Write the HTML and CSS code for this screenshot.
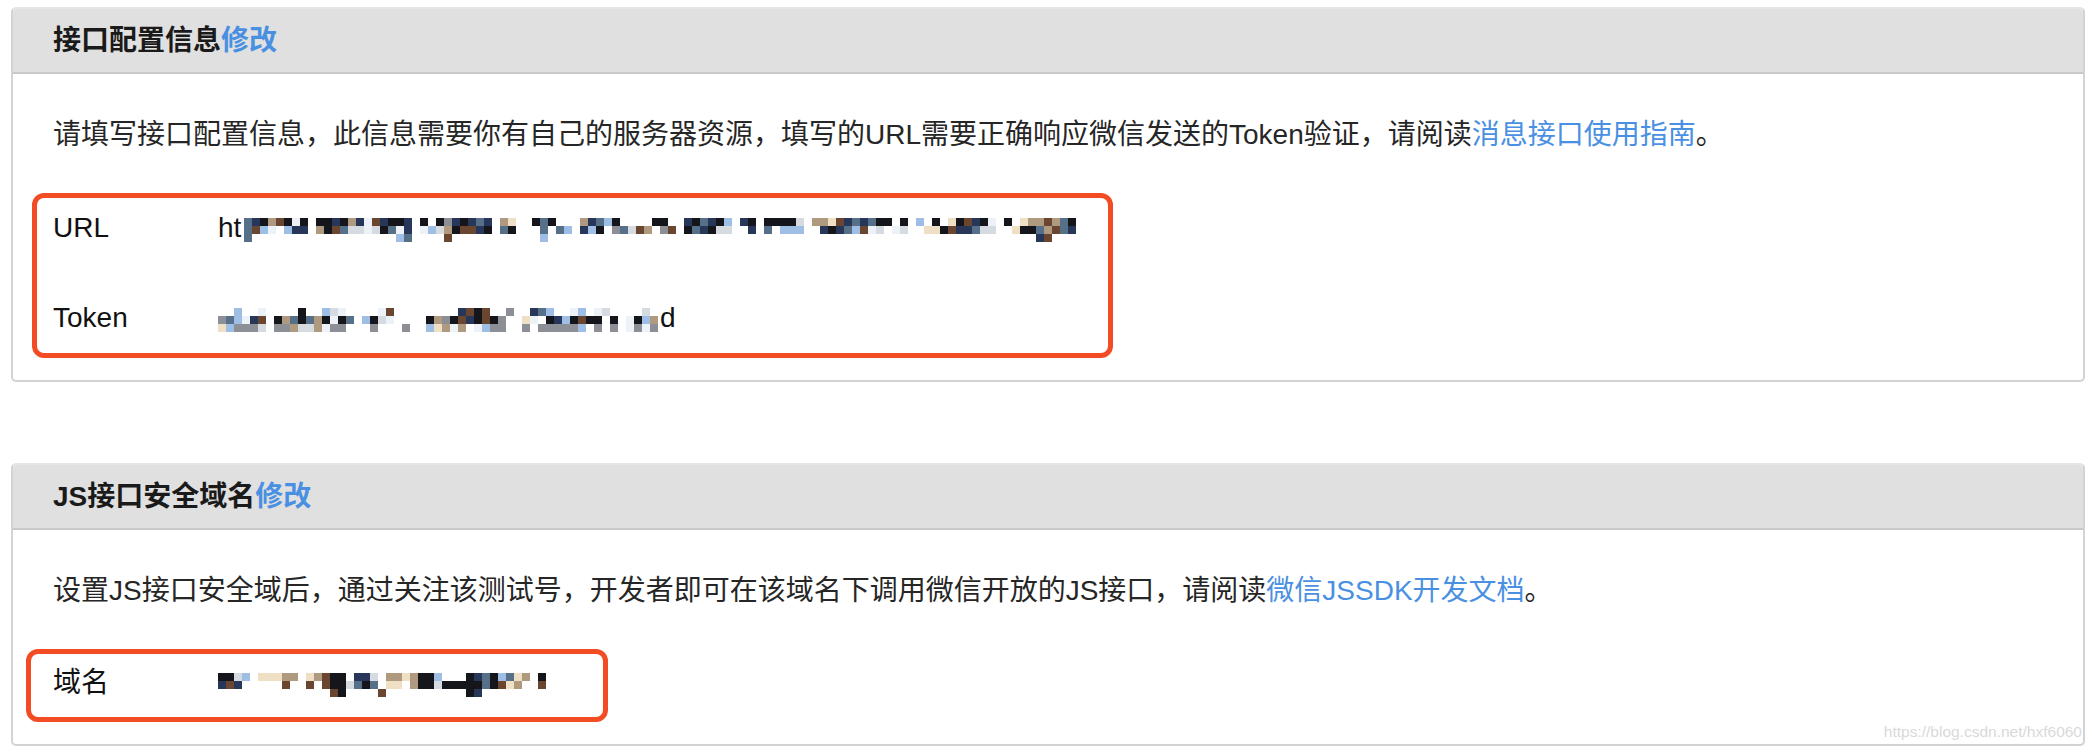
FILE: index.html
```html
<!DOCTYPE html>
<html lang="zh-CN">
<head>
<meta charset="utf-8">
<title>测试号管理</title>
<link rel="stylesheet" href="styles.css">
</head>
<body>
<div class="page">
  <section class="panel">
    <div class="panel-hd">接口配置信息<a class="link" href="#">修改</a></div>
    <div class="panel-bd">
      <p class="desc">请填写接口配置信息，此信息需要你有自己的服务器资源，填写的URL需要正确响应微信发送的Token验证，请阅读<a class="link" href="#">消息接口使用指南</a>。</p>
      <div class="mark mark-cfg">
        <div class="row">
          <div class="label">URL</div>
          <div class="value">ht<svg class="mz mz-url" width="836" height="24" viewBox="0 0 836 24">
            <rect class="s" x="0" y="0"/><rect class="n" x="8" y="0"/><rect class="k" x="16" y="0"/><rect class="t" x="24" y="0"/><rect class="r" x="32" y="0"/><rect class="k" x="40" y="0"/><rect class="w" x="48" y="0"/><rect class="k" x="56" y="0"/>
            <rect class="s" x="0" y="8"/><rect class="r" x="8" y="8"/><rect class="b" x="16" y="8"/><rect class="w" x="24" y="8"/><rect class="b" x="40" y="8"/><rect class="n" x="48" y="8"/><rect class="n" x="56" y="8"/>
            <rect class="s" x="0" y="16"/>
            <rect class="k" x="72" y="0"/><rect class="k" x="80" y="0"/><rect class="n" x="88" y="0"/><rect class="k" x="96" y="0"/><rect class="t" x="104" y="0"/><rect class="n" x="112" y="0"/><rect class="w" x="120" y="0"/><rect class="r" x="128" y="0"/><rect class="n" x="136" y="0"/><rect class="k" x="144" y="0"/><rect class="k" x="152" y="0"/><rect class="n" x="160" y="0"/>
            <rect class="t" x="72" y="8"/><rect class="k" x="80" y="8"/><rect class="r" x="88" y="8"/><rect class="s" x="96" y="8"/><rect class="g" x="104" y="8"/><rect class="g" x="112" y="8"/><rect class="w" x="120" y="8"/><rect class="g" x="128" y="8"/><rect class="k" x="136" y="8"/><rect class="s" x="144" y="8"/><rect class="w" x="152" y="8"/><rect class="n" x="160" y="8"/>
            <rect class="b" x="152" y="16"/><rect class="s" x="160" y="16"/>
            <rect class="k" x="176" y="0"/><rect class="k" x="192" y="0"/><rect class="m" x="200" y="0"/><rect class="n" x="208" y="0"/><rect class="k" x="216" y="0"/><rect class="n" x="224" y="0"/><rect class="s" x="232" y="0"/><rect class="n" x="240" y="0"/><rect class="t" x="256" y="0"/><rect class="c" x="264" y="0"/>
            <rect class="w" x="176" y="8"/><rect class="b" x="184" y="8"/><rect class="g" x="192" y="8"/><rect class="t" x="200" y="8"/><rect class="k" x="208" y="8"/><rect class="r" x="216" y="8"/><rect class="r" x="224" y="8"/><rect class="n" x="232" y="8"/><rect class="k" x="240" y="8"/><rect class="s" x="256" y="8"/><rect class="k" x="264" y="8"/>
            <rect class="r" x="200" y="16"/>
            <rect class="k" x="288" y="0"/><rect class="s" x="296" y="0"/><rect class="k" x="304" y="0"/>
            <rect class="s" x="296" y="8"/><rect class="s" x="312" y="8"/><rect class="b" x="320" y="8"/>
            <rect class="b" x="296" y="16"/>
            <rect class="t" x="336" y="0"/><rect class="n" x="344" y="0"/><rect class="s" x="352" y="0"/><rect class="b" x="360" y="0"/><rect class="k" x="368" y="0"/><rect class="k" x="408" y="0"/><rect class="k" x="416" y="0"/><rect class="n" x="440" y="0"/><rect class="k" x="448" y="0"/><rect class="s" x="456" y="0"/><rect class="n" x="464" y="0"/><rect class="k" x="472" y="0"/><rect class="b" x="480" y="0"/><rect class="n" x="496" y="0"/><rect class="k" x="504" y="0"/><rect class="k" x="520" y="0"/><rect class="k" x="528" y="0"/><rect class="k" x="536" y="0"/><rect class="k" x="544" y="0"/><rect class="g" x="552" y="0"/>
            <rect class="n" x="336" y="8"/><rect class="b" x="344" y="8"/><rect class="k" x="352" y="8"/><rect class="m" x="368" y="8"/><rect class="s" x="376" y="8"/><rect class="g" x="384" y="8"/><rect class="r" x="392" y="8"/><rect class="t" x="400" y="8"/><rect class="m" x="416" y="8"/><rect class="r" x="424" y="8"/><rect class="k" x="440" y="8"/><rect class="s" x="448" y="8"/><rect class="n" x="456" y="8"/><rect class="k" x="464" y="8"/><rect class="g" x="472" y="8"/><rect class="g" x="480" y="8"/><rect class="n" x="504" y="8"/><rect class="s" x="520" y="8"/><rect class="b" x="536" y="8"/><rect class="b" x="544" y="8"/><rect class="b" x="552" y="8"/>
            <rect class="t" x="568" y="0"/><rect class="t" x="576" y="0"/><rect class="c" x="584" y="0"/><rect class="r" x="592" y="0"/><rect class="n" x="600" y="0"/><rect class="s" x="608" y="0"/><rect class="n" x="616" y="0"/><rect class="s" x="624" y="0"/><rect class="k" x="632" y="0"/><rect class="k" x="640" y="0"/><rect class="k" x="656" y="0"/><rect class="b" x="672" y="0"/><rect class="k" x="688" y="0"/><rect class="c" x="704" y="0"/><rect class="k" x="712" y="0"/><rect class="r" x="720" y="0"/><rect class="n" x="728" y="0"/><rect class="k" x="736" y="0"/><rect class="w" x="744" y="0"/>
            <rect class="n" x="576" y="8"/><rect class="k" x="584" y="8"/><rect class="n" x="592" y="8"/><rect class="s" x="600" y="8"/><rect class="b" x="608" y="8"/><rect class="r" x="616" y="8"/><rect class="w" x="624" y="8"/><rect class="g" x="632" y="8"/><rect class="w" x="648" y="8"/><rect class="g" x="656" y="8"/><rect class="c" x="680" y="8"/><rect class="c" x="688" y="8"/><rect class="k" x="696" y="8"/><rect class="r" x="704" y="8"/><rect class="n" x="712" y="8"/><rect class="n" x="720" y="8"/><rect class="s" x="728" y="8"/><rect class="g" x="736" y="8"/><rect class="g" x="744" y="8"/>
            <rect class="k" x="760" y="0"/><rect class="c" x="776" y="0"/><rect class="t" x="784" y="0"/><rect class="t" x="792" y="0"/><rect class="r" x="800" y="0"/><rect class="t" x="808" y="0"/><rect class="s" x="816" y="0"/><rect class="k" x="824" y="0"/>
            <rect class="c" x="768" y="8"/><rect class="k" x="776" y="8"/><rect class="k" x="784" y="8"/><rect class="s" x="792" y="8"/><rect class="t" x="800" y="8"/><rect class="r" x="808" y="8"/><rect class="s" x="816" y="8"/><rect class="n" x="824" y="8"/>
            <rect class="n" x="792" y="16"/><rect class="r" x="800" y="16"/>
          </svg></div>
        </div>
        <div class="row">
          <div class="label">Token</div>
          <div class="value"><svg class="mz mz-token" width="442" height="24" viewBox="0 0 442 24">
            <rect class="b" x="16" y="0"/><rect class="w" x="40" y="0"/><rect class="k" x="80" y="0"/><rect class="b" x="104" y="0"/><rect class="g" x="112" y="0"/><rect class="w" x="120" y="0"/><rect class="w" x="160" y="0"/><rect class="r" x="168" y="0"/><rect class="n" x="240" y="0"/><rect class="r" x="248" y="0"/><rect class="k" x="256" y="0"/><rect class="r" x="264" y="0"/><rect class="m" x="288" y="0"/><rect class="n" x="312" y="0"/><rect class="s" x="320" y="0"/><rect class="b" x="328" y="0"/><rect class="w" x="352" y="0"/><rect class="b" x="360" y="0"/><rect class="w" x="376" y="0"/><rect class="g" x="384" y="0"/><rect class="g" x="424" y="0"/>
            <rect class="m" x="0" y="8"/><rect class="s" x="8" y="8"/><rect class="b" x="16" y="8"/><rect class="w" x="24" y="8"/><rect class="n" x="32" y="8"/><rect class="r" x="40" y="8"/><rect class="k" x="56" y="8"/><rect class="t" x="64" y="8"/><rect class="s" x="72" y="8"/><rect class="k" x="80" y="8"/><rect class="s" x="88" y="8"/><rect class="t" x="96" y="8"/><rect class="k" x="104" y="8"/><rect class="w" x="112" y="8"/><rect class="k" x="120" y="8"/><rect class="s" x="128" y="8"/><rect class="b" x="144" y="8"/><rect class="k" x="152" y="8"/><rect class="g" x="160" y="8"/><rect class="w" x="168" y="8"/><rect class="k" x="208" y="8"/><rect class="t" x="216" y="8"/><rect class="m" x="224" y="8"/><rect class="k" x="232" y="8"/><rect class="r" x="240" y="8"/><rect class="n" x="248" y="8"/><rect class="k" x="256" y="8"/><rect class="r" x="264" y="8"/><rect class="k" x="272" y="8"/><rect class="m" x="280" y="8"/><rect class="c" x="304" y="8"/><rect class="w" x="312" y="8"/><rect class="k" x="328" y="8"/><rect class="n" x="336" y="8"/><rect class="b" x="344" y="8"/><rect class="k" x="352" y="8"/><rect class="r" x="360" y="8"/><rect class="k" x="368" y="8"/><rect class="k" x="376" y="8"/><rect class="k" x="392" y="8"/><rect class="w" x="408" y="8"/><rect class="k" x="416" y="8"/><rect class="b" x="424" y="8"/><rect class="t" x="432" y="8"/>
            <rect class="c" x="0" y="16"/><rect class="b" x="8" y="16"/><rect class="m" x="16" y="16"/><rect class="m" x="24" y="16"/><rect class="m" x="32" y="16"/><rect class="g" x="40" y="16"/><rect class="m" x="56" y="16"/><rect class="m" x="64" y="16"/><rect class="t" x="72" y="16"/><rect class="g" x="80" y="16"/><rect class="g" x="88" y="16"/><rect class="t" x="96" y="16"/><rect class="w" x="104" y="16"/><rect class="m" x="112" y="16"/><rect class="m" x="120" y="16"/><rect class="m" x="152" y="16"/><rect class="m" x="184" y="16"/><rect class="b" x="208" y="16"/><rect class="c" x="216" y="16"/><rect class="t" x="224" y="16"/><rect class="w" x="232" y="16"/><rect class="t" x="240" y="16"/><rect class="w" x="256" y="16"/><rect class="b" x="264" y="16"/><rect class="m" x="272" y="16"/><rect class="m" x="280" y="16"/><rect class="m" x="304" y="16"/><rect class="m" x="320" y="16"/><rect class="m" x="328" y="16"/><rect class="m" x="336" y="16"/><rect class="m" x="344" y="16"/><rect class="m" x="352" y="16"/><rect class="b" x="360" y="16"/><rect class="m" x="376" y="16"/><rect class="m" x="392" y="16"/><rect class="w" x="408" y="16"/><rect class="m" x="416" y="16"/><rect class="w" x="424" y="16"/><rect class="m" x="432" y="16"/>
          </svg>d</div>
        </div>
      </div>
    </div>
  </section>

  <section class="panel panel-js">
    <div class="panel-hd">JS接口安全域名<a class="link" href="#">修改</a></div>
    <div class="panel-bd">
      <p class="desc">设置JS接口安全域后，通过关注该测试号，开发者即可在该域名下调用微信开放的JS接口，请阅读<a class="link" href="#">微信JSSDK开发文档</a>。</p>
      <div class="mark mark-domain">
        <div class="row">
          <div class="label">域名</div>
          <div class="value"><svg class="mz mz-domain" width="328" height="24" viewBox="0 0 328 24">
            <rect class="k" x="0" y="0"/><rect class="k" x="8" y="0"/><rect class="g" x="16" y="0"/><rect class="b" x="24" y="0"/><rect class="c" x="40" y="0"/><rect class="c" x="48" y="0"/><rect class="c" x="56" y="0"/><rect class="t" x="64" y="0"/><rect class="t" x="72" y="0"/><rect class="c" x="88" y="0"/><rect class="t" x="96" y="0"/><rect class="r" x="104" y="0"/><rect class="k" x="112" y="0"/><rect class="k" x="120" y="0"/><rect class="n" x="136" y="0"/><rect class="n" x="144" y="0"/><rect class="g" x="152" y="0"/><rect class="t" x="168" y="0"/><rect class="t" x="176" y="0"/><rect class="c" x="184" y="0"/><rect class="t" x="192" y="0"/><rect class="k" x="200" y="0"/><rect class="k" x="208" y="0"/><rect class="b" x="216" y="0"/><rect class="k" x="248" y="0"/><rect class="n" x="256" y="0"/><rect class="s" x="264" y="0"/><rect class="k" x="272" y="0"/><rect class="b" x="280" y="0"/><rect class="s" x="288" y="0"/><rect class="c" x="296" y="0"/><rect class="t" x="304" y="0"/><rect class="k" x="320" y="0"/>
            <rect class="n" x="0" y="8"/><rect class="r" x="8" y="8"/><rect class="n" x="16" y="8"/><rect class="r" x="64" y="8"/><rect class="r" x="88" y="8"/><rect class="r" x="104" y="8"/><rect class="k" x="112" y="8"/><rect class="k" x="120" y="8"/><rect class="g" x="128" y="8"/><rect class="s" x="136" y="8"/><rect class="k" x="144" y="8"/><rect class="s" x="152" y="8"/><rect class="c" x="168" y="8"/><rect class="c" x="176" y="8"/><rect class="t" x="192" y="8"/><rect class="k" x="200" y="8"/><rect class="k" x="208" y="8"/><rect class="g" x="216" y="8"/><rect class="k" x="224" y="8"/><rect class="k" x="232" y="8"/><rect class="k" x="240" y="8"/><rect class="k" x="248" y="8"/><rect class="k" x="256" y="8"/><rect class="s" x="264" y="8"/><rect class="k" x="272" y="8"/><rect class="r" x="280" y="8"/><rect class="c" x="288" y="8"/><rect class="t" x="296" y="8"/><rect class="r" x="320" y="8"/>
            <rect class="r" x="112" y="16"/><rect class="k" x="120" y="16"/><rect class="r" x="160" y="16"/><rect class="k" x="248" y="16"/><rect class="n" x="256" y="16"/>
          </svg></div>
        </div>
      </div>
    </div>
    <div class="watermark">https://blog.csdn.net/hxf6060</div>
  </section>
</div>
</body>
</html>
```

FILE: styles.css
```css
* { box-sizing: border-box; }

html, body {
  margin: 0;
  padding: 0;
  background: #ffffff;
}

body {
  font-family: "Liberation Sans", "Noto Sans CJK SC", sans-serif;
  font-size: 28px;
  color: #262626;
}

.page {
  padding: 7px 7px 0 11px;
}

.panel {
  position: relative;
  border: 2px solid #d3d3d3;
  border-top-color: #e6e6e6;
  border-radius: 5px;
  background: #ffffff;
  overflow: hidden;
}

.panel-js {
  margin-top: 81px;
}

.panel-hd {
  height: 65px;
  line-height: 63px;
  padding-left: 40px;
  background: #e0e0e0;
  border-bottom: 2px solid #c9c9c9;
  font-weight: bold;
  color: #1a1a1a;
}

.link {
  color: #4a90e2;
  text-decoration: none;
}

.panel-bd {
  padding: 41px 0 22px 0;
}

.desc {
  margin: 0 0 38px 40px;
  line-height: 40px;
  color: #262626;
}

.mark {
  border: 5px solid #f34b24;
  border-radius: 12px;
}

.mark-cfg {
  width: 1081px;
  margin-left: 19px;
  padding: 10px 0 15px 16px;
  display: flex;
  flex-direction: column;
  gap: 50px;
}

.mark-domain {
  width: 582px;
  margin-left: 13px;
  padding: 9px 0 14px 22px;
}

.row {
  display: flex;
  height: 40px;
  line-height: 40px;
  color: #111111;
}

.label {
  flex: none;
  width: 165px;
}

.value {
  white-space: nowrap;
  color: #111111;
}

.mz {
  display: inline-block;
  vertical-align: -5px;
}

.mz-url {
  margin-left: 3px;
}

.mz rect {
  width: 8px;
  height: 8px;
}

.mz .k { fill: #14161b; }
.mz .n { fill: #26375a; }
.mz .s { fill: #56708a; }
.mz .b { fill: #9ebee6; }
.mz .t { fill: #b09a7f; }
.mz .r { fill: #6a4530; }
.mz .g { fill: #d6dbe2; }
.mz .w { fill: #edf2f8; }
.mz .m { fill: #8c9096; }
.mz .c { fill: #efdfc4; }

.watermark {
  position: absolute;
  right: 1px;
  top: 259px;
  font-family: "Liberation Sans", sans-serif;
  font-size: 15.5px;
  line-height: 15.5px;
  color: #d9d9d9;
  white-space: nowrap;
}
```
